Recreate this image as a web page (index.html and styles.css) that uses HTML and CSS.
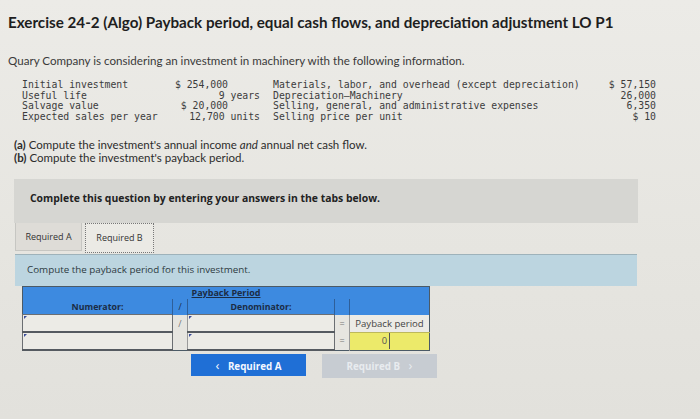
FILE: index.html
```html
<!DOCTYPE html>
<html>
<head>
<meta charset="utf-8">
<link rel="stylesheet" href="styles.css">
</head>
<body>
<div class="page">
  <h1 class="title">Exercise 24-2 (Algo) Payback period, equal cash flows, and depreciation adjustment LO P1</h1>
  <p class="intro">Quary Company is considering an investment in machinery with the following information.</p>
  <div class="data">
    <div class="c1">Initial investment</div><div class="c2 amt">$ 254,000</div><div class="c4">Materials, labor, and overhead (except depreciation)</div><div class="c5">$ 57,150</div>
    <div class="c1">Useful life</div><div class="c2">9 years</div><div class="c4">Depreciation—Machinery</div><div class="c5">26,000</div>
    <div class="c1">Salvage value</div><div class="c2 amt">$ 20,000</div><div class="c4">Selling, general, and administrative expenses</div><div class="c5">6,350</div>
    <div class="c1">Expected sales per year</div><div class="c2">12,700 units</div><div class="c4">Selling price per unit</div><div class="c5">$ 10</div>
  </div>
  <div class="parts">
    <p><b>(a)</b> Compute the investment's annual income <i>and</i> annual net cash flow.</p>
    <p><b>(b)</b> Compute the investment's payback period.</p>
  </div>
  <div class="complete">Complete this question by entering your answers in the tabs below.</div>
  <div class="tabs">
    <div class="tab">Required A</div>
    <div class="tab active">Required B</div>
  </div>
  <div class="prompt">Compute the payback period for this investment.</div>
  <table class="calc">
    <tr class="hd">
      <td colspan="5" class="ttl"><u>Payback Period</u></td>
    </tr>
    <tr class="hd">
      <td class="num">Numerator:</td>
      <td class="sl">/</td>
      <td class="den">Denominator:</td>
      <td class="eq"></td>
      <td class="res"></td>
    </tr>
    <tr class="row">
      <td class="in"></td>
      <td class="sl">/</td>
      <td class="in"></td>
      <td class="eq">=</td>
      <td class="lbl">Payback period</td>
    </tr>
    <tr class="row">
      <td class="in"></td>
      <td class="sl"></td>
      <td class="in"></td>
      <td class="eq">=</td>
      <td class="ans"><div class="answ"><span class="v">0</span><span class="e"></span></div></td>
    </tr>
  </table>
  <div class="nav">
    <div class="btn prev"><span class="ch">&lsaquo;</span> Required A</div>
    <div class="btn next">Required B <span class="ch">&rsaquo;</span></div>
  </div>
</div>
</body>
</html>
```
FILE: styles.css
```css
html, body { margin: 0; padding: 0; }
body {
  width: 700px; height: 419px; overflow: hidden;
  background: linear-gradient(180deg, #ecebe7 0%, #e6e5e0 60%, #e2e1dc 100%);
  font-family: Lato, "Open Sans", sans-serif;
  color: #2a2a2a;
}
.page { padding: 13px 0 0 8px; }
.title {
  margin: 0; font-family: Lato, sans-serif; font-weight: 700;
  font-size: 15.2px; line-height: 18px; color: #1e1e1e;
}
.intro { margin: 23px 0 0 0; font-size: 11.6px; line-height: 14px; color: #3a3a3a; }
.data {
  margin: 12px 0 0 14px;
  display: grid;
  grid-template-columns: 130px 108px 320px 76px;
  font-family: "DejaVu Sans Mono", monospace; font-size: 9.8px; line-height: 10.5px;
  color: #3c3c3c;
}
.c1 { white-space: nowrap; }
.c2, .c5 { text-align: right; white-space: nowrap; }
.c2.amt { padding-right: 32px; }
.c4 { padding-left: 13px; white-space: nowrap; }
.parts { margin: 17px 0 0 6px; font-size: 11.5px; line-height: 12.5px; color: #2c2c2c; }
.parts p { margin: 0; }
.complete {
  margin: 15px 0 0 6px; width: 624px; height: 44px; box-sizing: border-box;
  background: #d6d6d2; padding: 12px 0 0 16px;
  font-family: "Open Sans", sans-serif; font-weight: 700; font-size: 10.4px; color: #222;
}
.tabs { display: flex; margin: 0 0 0 7px; gap: 3px; }
.tab {
  width: 67px; height: 28px; box-sizing: border-box; padding-top: 7px; text-align: center;
  font-family: "Open Sans", sans-serif; font-size: 9px; color: #333;
  background: #dedcd7; border: 1px solid #c6c6c2; border-top: none;
}
.tab.active { background: #ebeae5; border: 1px dotted #777; height: 30px; width: 69px; }
.prompt {
  margin: 1px 0 0 7px; width: 622px; height: 32px; box-sizing: border-box;
  background: #bcd5e0; border-top: 1px solid #9eb2ba; padding: 8px 0 0 12px;
  font-family: "Open Sans", sans-serif; font-size: 9.8px; color: #2d3a40;
}
.calc {
  margin: 0 0 0 14px; border-collapse: collapse; width: 408px;
  font-family: "Open Sans", sans-serif; font-size: 8.8px;
  border: 1px solid #4b5a66;
}
.calc td { padding: 0; }
.hd td { background: #3d8ae0; color: #1b2c45; font-weight: 700; text-align: center; }
.hd .ttl { height: 12px; line-height: 12px; font-size: 9px; }
.hd td { height: 15px; }
.hd .num { width: 149px; border-right: 1px solid #2e5f99; }
.hd .sl { width: 14px; border-right: 1px solid #2e5f99; font-weight: 400; }
.hd .den { width: 146px; border-right: 1px solid #2e5f99; }
.hd .eq { width: 14px; border-right: 1px solid #2e5f99; }
.row td { height: 16px; }
.row .in { background: #ecebe6; border: 1px solid #6b6e72; border-bottom: 2px solid #555a60; position: relative; }
.row .in::before {
  content: ""; position: absolute; left: 1px; top: 1px;
  border-left: 3px solid #3b4d9a; border-bottom: 3px solid transparent;
}
.row .sl, .row .eq {
  background: #e6e5e0; text-align: center; color: #777; font-size: 9px;
  border-right: 1px solid #9a9a9a;
}
.row .lbl { background: #ecebe6; text-align: center; color: #444; font-size: 9.6px; }
.row .ans { background: #ecea6a; padding: 0; border-top: 1px solid #bdb95a; }
.answ { display: flex; height: 16px; }
.answ .v { display: block; width: 37px; text-align: right; padding-right: 2px; line-height: 16px; border-right: 1px solid #555; color: #555; font-size: 9.4px; }
.answ .e { display: block; flex: 1; }
.nav { display: flex; margin: 3px 0 0 183px; gap: 16px; }
.btn {
  width: 115px; height: 22px; box-sizing: border-box; text-align: center;
  font-family: "Open Sans", sans-serif; font-weight: 700; font-size: 9.8px; line-height: 22px;
}
.btn .ch { font-size: 13px; font-weight: 400; margin-right: 6px; }
.next .ch { margin: 0 0 0 6px; }
.prev { background: #1f6fd6; color: #f4f7ff; }
.next { background: #c7ccd2; color: #e8ebef; height: 24px; }
```
